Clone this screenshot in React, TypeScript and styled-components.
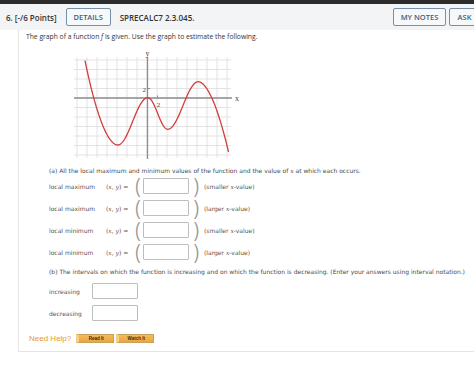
import React from "react";
import styled, { createGlobalStyle } from "styled-components";

const GlobalStyle = createGlobalStyle`
  html, body { margin: 0; padding: 0; background: #ffffff; }
  body { width: 474px; height: 365px; overflow: hidden; }
`;

const TopBar = styled.div`
  height: 4px;
  background: #2b2b2b;
`;

const Header = styled.div`
  height: 26px;
  background: #f3f4f5;
  display: flex;
  align-items: center;
  padding-left: 6px;
  overflow: hidden;
  font-family: "Open Sans", "Liberation Sans", sans-serif;
`;

const Points = styled.span`
  font-size: 8px;
  font-weight: 600;
  color: #333;
  white-space: nowrap;
`;

const HeadButton = styled.div<{ $w: number; $ml: number; $mr?: number }>`
  box-sizing: border-box;
  flex: none;
  width: ${(p) => p.$w}px;
  height: 18px;
  margin-left: ${(p) => p.$ml}px;
  margin-right: ${(p) => p.$mr ?? 0}px;
  border: 1px solid #7690aa;
  border-radius: 2px;
  background: #f7f8f9;
  color: #3f5e7e;
  font-size: 7.5px;
  font-weight: 600;
  display: flex;
  align-items: center;
  justify-content: center;
  white-space: nowrap;
`;

const Code = styled.span`
  margin-left: 9px;
  font-size: 8px;
  font-weight: 600;
  color: #333;
  white-space: nowrap;
`;

const Spacer = styled.div`
  flex: 1;
`;

const Panel = styled.div`
  margin-left: 18px;
  height: 322px;
  box-sizing: border-box;
  border-left: 1px solid #e4e4e4;
  border-bottom: 1px solid #e4e4e4;
  padding: 2px 0 0 7px;
  font-family: "DejaVu Sans", Verdana, sans-serif;
  color: #444;
`;

const Intro = styled.div`
  font-family: "Open Sans", "Liberation Sans", sans-serif;
  font-size: 6.75px;
  line-height: 10px;
  color: #333;
  white-space: nowrap;
`;

const GraphBox = styled.svg`
  display: block;
  margin: 6px 0 0 45px;
`;

const Section = styled.div<{ $mt: number }>`
  margin: ${(p) => p.$mt}px 0 0 23px;
`;

const Prompt = styled.div<{ $mb?: number }>`
  font-size: 6px;
  line-height: 8px;
  margin-bottom: ${(p) => p.$mb ?? 0}px;
  color: #4a4a4a;
  white-space: nowrap;
`;

const AnswerRow = styled.div<{ $h: number }>`
  display: flex;
  align-items: center;
  height: ${(p) => p.$h}px;
  font-size: 6px;
  color: #555;
  white-space: nowrap;
`;

const Label = styled.span<{ $w: number }>`
  width: ${(p) => p.$w}px;
  flex: none;
`;

const Coord = styled.span`
  width: 28px;
  flex: none;
`;

const Paren = styled.span`
  font-family: "Liberation Sans", sans-serif;
  font-size: 21px;
  font-weight: 300;
  line-height: 16px;
  color: #999;
  transform: scaleX(0.75);
  display: inline-block;
`;

const Box = styled.div<{ $ml?: number }>`
  box-sizing: border-box;
  width: 46px;
  height: 16px;
  margin: 0 4px 0 ${(p) => p.$ml ?? 2}px;
  border: 1px solid #bdbdbd;
  border-radius: 1px;
  background: #fff;
  flex: none;
`;

const Note = styled.span`
  margin-left: 4px;
`;

const HelpRow = styled.div`
  display: flex;
  align-items: center;
  margin: 10px 0 0 3px;
  gap: 2px;
`;

const Help = styled.span`
  font-family: "Liberation Sans", Arial, sans-serif;
  font-size: 8px;
  color: #e8952f;
  margin-right: 3px;
  white-space: nowrap;
`;

const HelpButton = styled.div`
  box-sizing: border-box;
  width: 38px;
  height: 9px;
  border: 1px solid #c9a15a;
  border-left: 3px solid #f7cf86;
  background: linear-gradient(#f5bd5c, #eaa43f);
  font-family: "Liberation Sans", Arial, sans-serif;
  font-size: 4.5px;
  font-weight: 700;
  color: #3a2a10;
  display: flex;
  align-items: center;
  justify-content: center;
`;

const X = styled.i`
  font-family: "DejaVu Serif", "Liberation Serif", serif;
`;

type P = [number, number];

function curvePoints(): string {
  const ox = 70;
  const oy = 48;
  const ext: P[] = [
    [116.7, 145],
    [146.7, 97.7],
    [166.7, 129.3],
    [197.3, 81.7],
  ];
  const start: P = [84, 60.7];
  const end: P = [227.7, 152.7];
  const pts: P[] = [];
  for (let x = start[0]; x <= end[0]; x += 0.5) {
    let y: number;
    if (x <= ext[0][0]) {
      const t = (ext[0][0] - x) / (ext[0][0] - start[0]);
      y = ext[0][1] + (start[1] - ext[0][1]) * Math.pow(t, 1.87);
    } else if (x >= ext[3][0]) {
      const t = (x - ext[3][0]) / (end[0] - ext[3][0]);
      y = ext[3][1] + (end[1] - ext[3][1]) * Math.pow(t, 1.82);
    } else {
      let i = 0;
      while (x > ext[i + 1][0]) i++;
      const a = ext[i];
      const b = ext[i + 1];
      const t = (x - a[0]) / (b[0] - a[0]);
      y = a[1] + (b[1] - a[1]) * (1 - Math.cos(Math.PI * t)) / 2;
    }
    pts.push([x - ox, y - oy]);
  }
  return pts.map((p) => `${p[0].toFixed(2)},${p[1].toFixed(2)}`).join(" ");
}

function Graph() {
  const ox = 70;
  const oy = 48;
  const vx: number[] = [];
  for (let k = 0; k <= 15; k++) vx.push(76 + 10 * k - ox);
  const hy: number[] = [];
  for (let k = -4; k <= 6; k++) hy.push(98 + 9.5 * k - oy);
  const axX = 146.5 - ox;
  const axY = 98 - oy;
  return (
    <GraphBox width={175} height={112} viewBox="0 0 175 112">
      {vx.map((x) => (
        <line key={"v" + x} x1={x} x2={x} y1={57 - oy} y2={158 - oy} stroke="#dcdcdc" strokeWidth={0.8} />
      ))}
      {hy.map((y) => (
        <line key={"h" + y} x1={73 - ox} x2={230 - ox} y1={y} y2={y} stroke="#dcdcdc" strokeWidth={0.8} />
      ))}
      <line x1={73 - ox} x2={231 - ox} y1={axY} y2={axY} stroke="#8c8c8c" strokeWidth={1.3} />
      <line x1={axX} x2={axX} y1={57 - oy} y2={159 - oy} stroke="#8c8c8c" strokeWidth={1.3} />
      <line x1={axX} x2={axX + 2.5} y1={88.5 - oy} y2={88.5 - oy} stroke="#777" strokeWidth={0.8} />
      <line x1={156.5 - ox} x2={156.5 - ox} y1={axY - 2.5} y2={axY} stroke="#777" strokeWidth={0.8} />
      <polyline points={curvePoints()} fill="none" stroke="#d33c3c" strokeWidth={1.3} />
      <text x={axX} y={56 - oy} textAnchor="middle" fontFamily="'Liberation Serif', serif" fontSize={8} fill="#444">y</text>
      <text x={236 - ox} y={100.5 - oy} textAnchor="middle" fontFamily="'Liberation Serif', serif" fontSize={8} fill="#444">x</text>
      <text x={145 - ox} y={92 - oy} textAnchor="end" fontFamily="'Liberation Serif', serif" fontSize={7} fill="#444">2</text>
      <text x={157.5 - ox} y={106.5 - oy} textAnchor="middle" fontFamily="'Liberation Serif', serif" fontSize={7} fill="#444">2</text>
    </GraphBox>
  );
}

const rowsA: [string, string][] = [
  ["local maximum", "smaller"],
  ["local maximum", "larger"],
  ["local minimum", "smaller"],
  ["local minimum", "larger"],
];

export default function App() {
  return (
    <>
      <GlobalStyle />
      <TopBar />
      <Header>
        <Points>6. [-/6 Points]</Points>
        <HeadButton $w={45} $ml={9}>DETAILS</HeadButton>
        <Code>SPRECALC7 2.3.045.</Code>
        <Spacer />
        <HeadButton $w={53} $ml={0}>MY NOTES</HeadButton>
        <HeadButton $w={31} $ml={3} $mr={-6}>ASK</HeadButton>
      </Header>
      <Panel>
        <Intro>
          The graph of a function <i>f</i> is given. Use the graph to estimate the following.
        </Intro>
        <Graph />
        <Section $mt={7}>
          <Prompt>
            (a) All the local maximum and minimum values of the function and the value of <X>x</X> at which each occurs.
          </Prompt>
          {rowsA.map(([label, which], i) => (
            <AnswerRow key={i} $h={22}>
              <Label $w={57}>{label}</Label>
              <Coord>
                (<X>x</X>, <X>y</X>) =
              </Coord>
              <Paren>(</Paren>
              <Box />
              <Paren>)</Paren>
              <Note>
                ({which} <X>x</X>-value)
              </Note>
            </AnswerRow>
          ))}
        </Section>
        <Section $mt={5}>
          <Prompt $mb={4}>
            (b) The intervals on which the function is increasing and on which the function is decreasing. (Enter your answers using interval notation.)
          </Prompt>
          <AnswerRow $h={22}>
            <Label $w={43}>increasing</Label>
            <Box $ml={0} />
          </AnswerRow>
          <AnswerRow $h={22}>
            <Label $w={43}>decreasing</Label>
            <Box $ml={0} />
          </AnswerRow>
        </Section>
        <HelpRow>
          <Help>Need Help?</Help>
          <HelpButton>Read It</HelpButton>
          <HelpButton>Watch It</HelpButton>
        </HelpRow>
      </Panel>
    </>
  );
}
